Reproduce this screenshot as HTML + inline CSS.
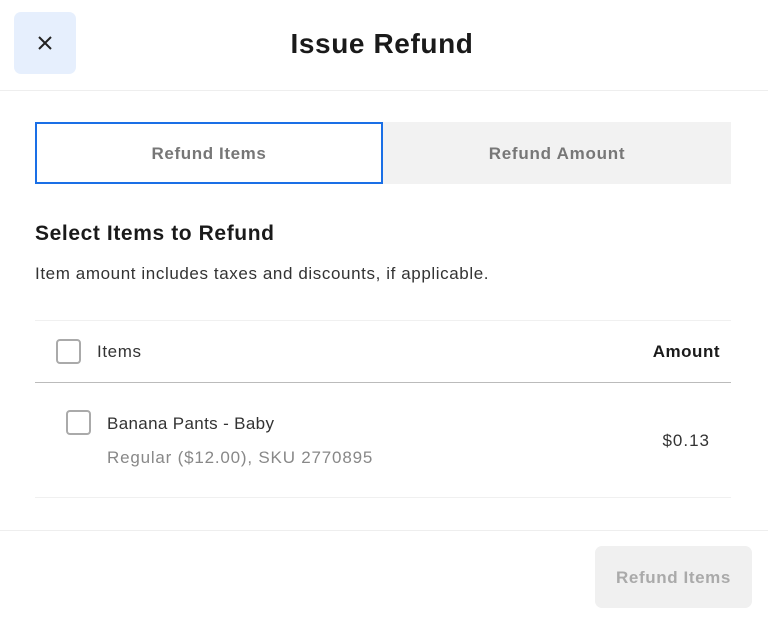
<!DOCTYPE html>
<html><head><style>
*{margin:0;padding:0;box-sizing:border-box}
body{width:768px;height:618px;background:#fff;font-family:"Liberation Sans",sans-serif;position:relative;overflow:hidden;color:#1f1f1f}
.a{position:absolute}
.cb{position:absolute;width:25px;height:25px;border:2px solid #aaa;border-radius:4px;background:#fff}
.t{white-space:nowrap;line-height:1}
</style></head><body>
<div class="a" style="left:14px;top:12px;width:62px;height:62px;background:#e6effd;border-radius:7px"></div>
<svg class="a" style="left:37px;top:35px" width="16" height="16" viewBox="0 0 16 16"><path d="M2 2L14 14M14 2L2 14" stroke="#222" stroke-width="2"/></svg>
<div class="a t" style="left:0;width:764px;text-align:center;top:30px;font-size:28px;font-weight:bold;color:#1a1a1a;letter-spacing:0.6px">Issue Refund</div>
<div class="a" style="left:0;top:90px;width:768px;height:1px;background:#eee"></div>
<div class="a" style="left:383px;top:122px;width:348px;height:62px;background:#f2f2f2"></div>
<div class="a" style="left:35px;top:122px;width:348px;height:62px;border:2px solid #1a6fe6;background:#fff"></div>
<div class="a t" style="left:35px;width:348px;text-align:center;top:145px;font-size:17px;font-weight:bold;color:#777;letter-spacing:0.6px">Refund Items</div>
<div class="a t" style="left:383px;width:348px;text-align:center;top:145px;font-size:17px;font-weight:bold;color:#777;letter-spacing:0.75px">Refund Amount</div>
<div class="a t" style="left:35px;top:223px;font-size:21px;font-weight:bold;color:#1a1a1a;letter-spacing:0.6px">Select Items to Refund</div>
<div class="a t" style="left:35px;top:265px;font-size:17px;color:#333;letter-spacing:0.6px">Item amount includes taxes and discounts, if applicable.</div>
<div class="a" style="left:35px;top:320px;width:696px;height:1px;background:#f0f0f0"></div>
<div class="cb" style="left:56px;top:339px"></div>
<div class="a t" style="left:97px;top:343px;font-size:17px;color:#333;letter-spacing:0.6px">Items</div>
<div class="a t" style="right:48px;top:343px;font-size:17px;font-weight:bold;color:#1a1a1a;letter-spacing:0.5px">Amount</div>
<div class="a" style="left:35px;top:382px;width:696px;height:1px;background:#bbb"></div>
<div class="cb" style="left:66px;top:410px"></div>
<div class="a t" style="left:107px;top:415px;font-size:17px;color:#333;letter-spacing:0.35px">Banana Pants - Baby</div>
<div class="a t" style="left:107px;top:449px;font-size:17px;color:#888;letter-spacing:0.8px">Regular ($12.00), SKU 2770895</div>
<div class="a t" style="right:58px;top:432px;font-size:17px;color:#333;letter-spacing:1px">$0.13</div>
<div class="a" style="left:35px;top:497px;width:696px;height:1px;background:#f0f0f0"></div>
<div class="a" style="left:0;top:530px;width:768px;height:1px;background:#eee"></div>
<div class="a" style="left:595px;top:546px;width:157px;height:62px;background:#f0f0f0;border-radius:7px"></div>
<div class="a t" style="left:595px;width:157px;text-align:center;top:569px;font-size:17px;font-weight:bold;color:#aaa;letter-spacing:0.6px">Refund Items</div>
</body></html>
